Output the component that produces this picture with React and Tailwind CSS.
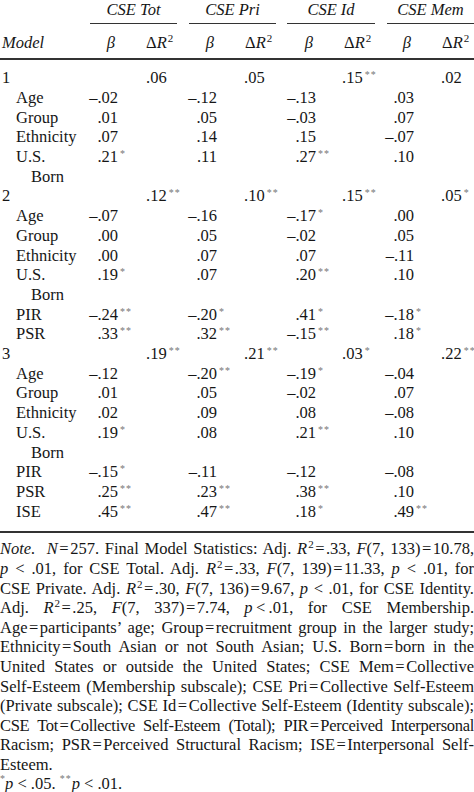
import React from 'react';

const cols = 'grid grid-cols-[88px_38px_60px_39px_57px_42px_60px_38px_52px]';
const dPad = ['pl-[20px]', 'pl-[19px]', 'pl-[18px]', 'pl-[19px]'];

const rows = [
  { model: '1', dr: ['.06', '.05', '.15**', '.02'] },
  { label: 'Age', b: ['–.02', '–.12', '–.13', '.03'] },
  { label: 'Group', b: ['.01', '.05', '–.03', '.07'] },
  { label: 'Ethnicity', b: ['.07', '.14', '.15', '–.07'] },
  { label: 'U.S.', born: true, b: ['.21*', '.11', '.27**', '.10'] },
  { model: '2', dr: ['.12**', '.10**', '.15**', '.05*'] },
  { label: 'Age', b: ['–.07', '–.16', '–.17*', '.00'] },
  { label: 'Group', b: ['.00', '.05', '–.02', '.05'] },
  { label: 'Ethnicity', b: ['.00', '.07', '.07', '–.11'] },
  { label: 'U.S.', born: true, b: ['.19*', '.07', '.20**', '.10'] },
  { label: 'PIR', b: ['–.24**', '–.20*', '.41*', '–.18*'] },
  { label: 'PSR', b: ['.33**', '.32**', '–.15**', '.18*'] },
  { model: '3', dr: ['.19**', '.21**', '.03*', '.22**'] },
  { label: 'Age', b: ['–.12', '–.20**', '–.19*', '–.04'] },
  { label: 'Group', b: ['.01', '.05', '–.02', '.07'] },
  { label: 'Ethnicity', b: ['.02', '.09', '.08', '–.08'] },
  { label: 'U.S.', born: true, b: ['.19*', '.08', '.21**', '.10'] },
  { label: 'PIR', b: ['–.15*', '–.11', '–.12', '–.08'] },
  { label: 'PSR', b: ['.25**', '.23**', '.38**', '.10'] },
  { label: 'ISE', b: ['.45**', '.47**', '.18*', '.49**'] },
];

const Val = ({ v }) => {
  if (!v) return null;
  const num = v.replace(/\*/g, '');
  const stars = v.length - num.length;
  return (
    <span className="relative">
      {num}
      {stars > 0 && (
        <span className="absolute left-full top-[2px] pl-[2px] text-[10px] leading-none text-[#777] tracking-[1px]">
          {'*'.repeat(stars)}
        </span>
      )}
    </span>
  );
};

const R2 = () => (
  <span>
    <i>R</i>
    <sup className="text-[11px] leading-none top-[-6px] ml-[1px]">2</sup>
  </span>
);

const Eq = () => <span className="mx-[1.5px]">=</span>;

const noteLines = [
  <><i>Note.</i>&nbsp; <i>N</i><Eq />257. Final Model Statistics: Adj. <R2 /><Eq />.33, <i>F</i>(7, 133)<Eq />10.78,</>,
  <><i>p</i> &lt; .01, for CSE Total. Adj. <R2 /><Eq />.33, <i>F</i>(7, 139)<Eq />11.33, <i>p</i> &lt; .01, for</>,
  <>CSE Private. Adj. <R2 /><Eq />.30, <i>F</i>(7, 136)<Eq />9.67, <i>p</i> &lt; .01, for CSE Identity.</>,
  <>Adj. <R2 /><Eq />.25, <i>F</i>(7, 337)<Eq />7.74, <i>p</i>&thinsp;&lt;&thinsp;.01, for CSE Membership.</>,
  <>Age<Eq />participants’ age; Group<Eq />recruitment group in the larger study;</>,
  <>Ethnicity<Eq />South Asian or not South Asian; U.S. Born<Eq />born in the</>,
  <>United States or outside the United States; CSE Mem<Eq />Collective</>,
  <>Self-Esteem (Membership subscale); CSE Pri<Eq />Collective Self-Esteem</>,
  <>(Private subscale); CSE Id<Eq />Collective Self-Esteem (Identity subscale);</>,
  <span className="tracking-[-0.3px]">CSE Tot<Eq />Collective Self-Esteem (Total); PIR<Eq />Perceived Interpersonal</span>,
  <>Racism; PSR<Eq />Perceived Structural Racism; ISE<Eq />Interpersonal Self-</>,
];

export default function App() {
  const groups = [
    { t: 'CSE Tot', cls: 'ml-[2px] mr-[9px]' },
    { t: 'CSE Pri', cls: 'ml-[3px] mr-[6px]' },
    { t: 'CSE Id', cls: 'ml-[5px] mr-[9px]' },
    { t: 'CSE Mem', cls: 'ml-[3px]' },
  ];

  return (
    <div className="w-[474px] min-h-[792px] bg-white text-[#161616] font-['Liberation_Serif','Times_New_Roman',serif] text-[16.5px] leading-[19.6px]">
      {/* Column heads */}
      <div className={cols}>
        <div />
        {groups.map((g) => (
          <div key={g.t} className={`col-span-2 ${g.cls} text-center italic pb-[3px] border-b border-[#333]`}>
            {g.t}
          </div>
        ))}
      </div>
      <div className={`${cols} pt-[9px] pb-[6px] border-b-2 border-[#333]`}>
        <div className="pl-[2px] italic">Model</div>
        {[0, 1, 2, 3].map((i) => (
          <React.Fragment key={i}>
            <div className="text-right pr-[11px] italic">β</div>
            <div className="pl-[20px]">Δ<R2 /></div>
          </React.Fragment>
        ))}
      </div>

      {/* Body */}
      <div className={`${cols} leading-[19.7px] pt-[8px] pb-[10px] border-b-2 border-[#333]`}>
        {rows.map((r, ri) => (
          <React.Fragment key={ri}>
            {r.model ? (
              <div className="pl-[2px]">{r.model}</div>
            ) : (
              <div className="pl-[16px]">
                {r.label}
                {r.born && <div className="pl-[15px]">Born</div>}
              </div>
            )}
            {[0, 1, 2, 3].map((i) => (
              <React.Fragment key={i}>
                <div className="text-right pr-[8px]"><Val v={r.b ? r.b[i] : null} /></div>
                <div className={dPad[i]}><Val v={r.dr ? r.dr[i] : null} /></div>
              </React.Fragment>
            ))}
          </React.Fragment>
        ))}
      </div>

      {/* Note */}
      <div className="pt-[6px]">
        {noteLines.map((l, i) => (
          <div key={i} className="text-justify [text-align-last:justify]">{l}</div>
        ))}
        <div>Esteem.</div>
        <div>
          <span className="text-[10px] leading-none text-[#777] align-top">*</span><i>p</i> &lt; .05.{' '}
          <span className="text-[10px] leading-none text-[#777] align-top tracking-[1px]">**</span><i>p</i> &lt; .01.
        </div>
      </div>
    </div>
  );
}
